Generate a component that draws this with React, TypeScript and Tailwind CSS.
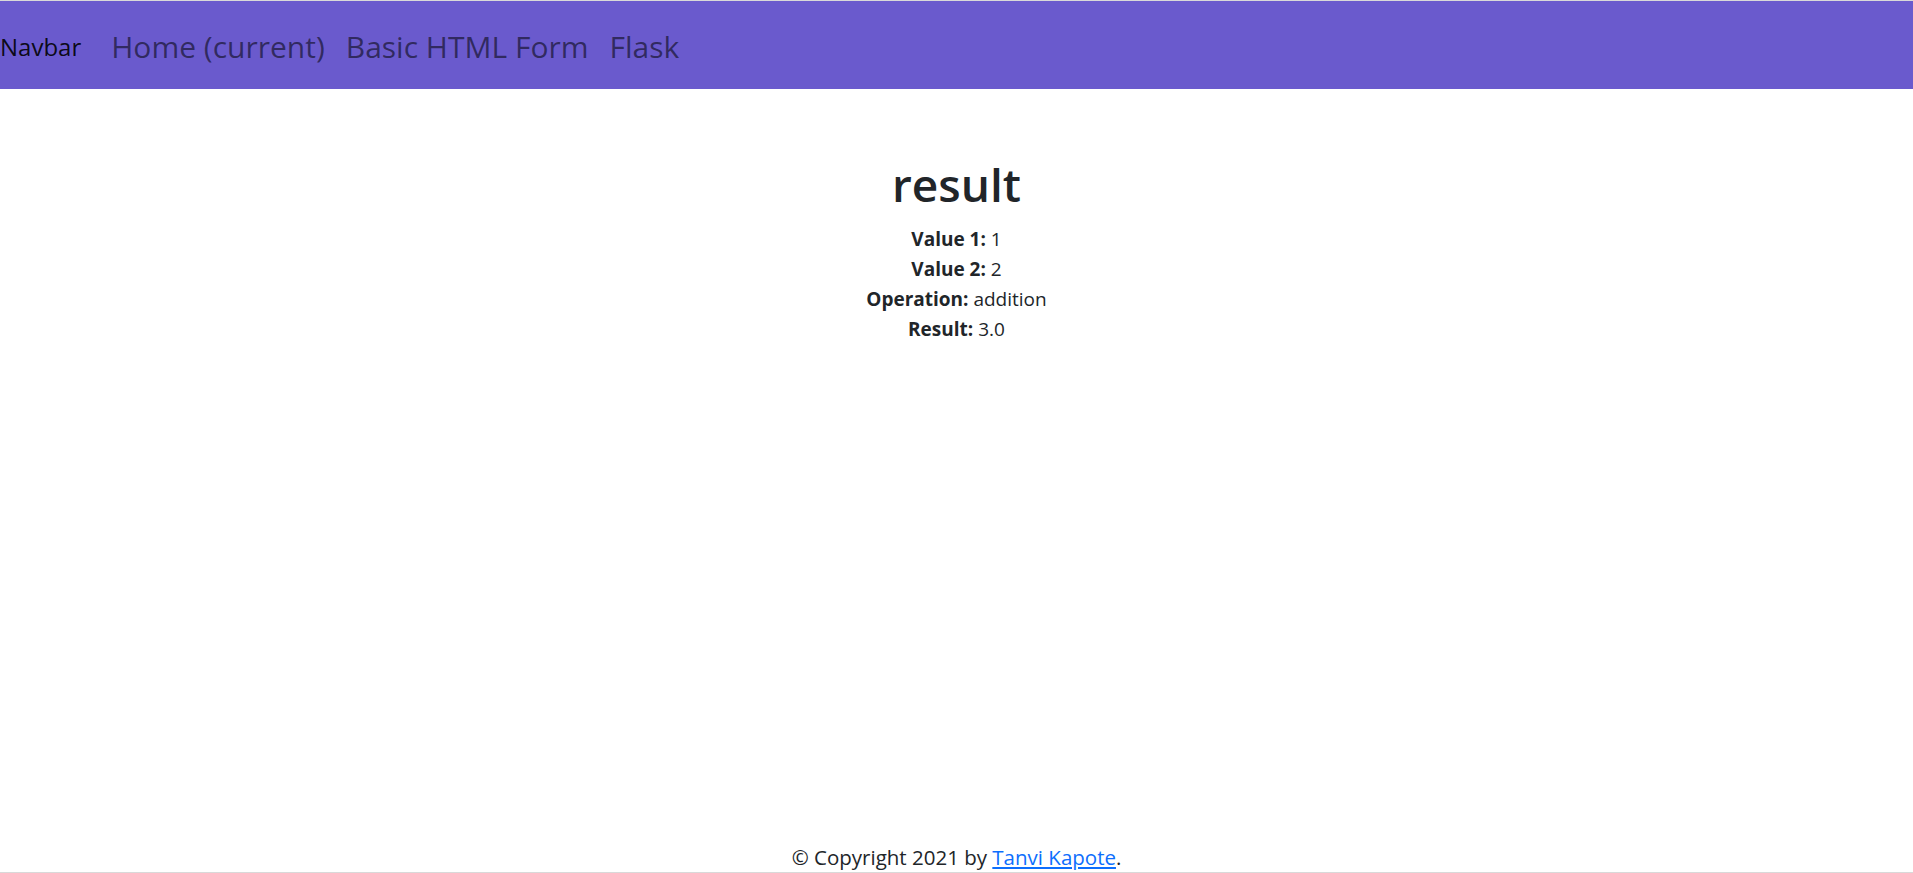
const font = { fontFamily: '"Open Sans", "Noto Sans", sans-serif' };

function Navbar() {
  return (
    <nav className="flex h-[88px] items-center bg-[#6a5acd] pt-[4px]">
      <a className="mr-[30px] text-[24px] text-black/90">Navbar</a>
      <ul className="flex items-center gap-[21px] text-[30px] text-black/55">
        <li>Home (current)</li>
        <li>Basic HTML Form</li>
        <li>Flask</li>
      </ul>
    </nav>
  );
}

function Row({ label, value }: { label: string; value: string }) {
  return (
    <div className="text-[19px]">
      <b className="font-bold">{label}:</b> {value}
    </div>
  );
}

export default function App() {
  return (
    <div
      className="flex h-screen flex-col border-y border-[#d9d9d9] bg-white text-[20px] leading-[30px] text-[#212529]"
      style={font}
    >
      <Navbar />
      <main className="pt-[65px] text-center">
        <h1 className="mb-[10px] text-[46px] leading-[60px] font-semibold">result</h1>
        <Row label="Value 1" value="1" />
        <Row label="Value 2" value="2" />
        <Row label="Operation" value="addition" />
        <Row label="Result" value="3.0" />
      </main>
      <footer className="mt-auto text-center text-[20.5px]">
        © Copyright 2021 by{" "}
        <a href="#" className="text-[#0d6efd] underline">
          Tanvi Kapote
        </a>
        .
      </footer>
    </div>
  );
}
